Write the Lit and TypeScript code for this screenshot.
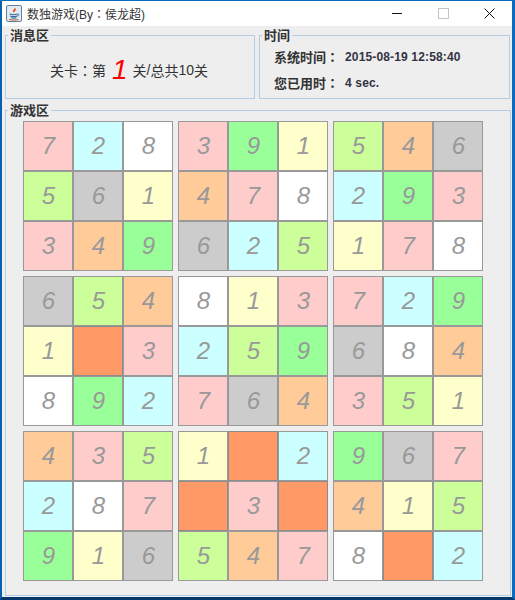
import { LitElement, html, css, svg } from "lit";
import { customElement } from "lit/decorators.js";

const COLORS: Record<number, string> = {
  0: "#ff9966", 1: "#ffffcc", 2: "#ccffff", 3: "#ffcccc", 4: "#ffcc99",
  5: "#ccff99", 6: "#cccccc", 7: "#ffcccc", 8: "#ffffff", 9: "#99ff99",
};

const BOARD = [
  [7,2,8,3,9,1,5,4,6],
  [5,6,1,4,7,8,2,9,3],
  [3,4,9,6,2,5,1,7,8],
  [6,5,4,8,1,3,7,2,9],
  [1,0,3,2,5,9,6,8,4],
  [8,9,2,7,6,4,3,5,1],
  [4,3,5,1,0,2,9,6,7],
  [2,8,7,0,3,0,4,1,5],
  [9,1,6,5,4,7,8,0,2],
];

const javaIcon = svg`<svg class="app-icon" viewBox="0 0 16 17" width="16" height="17">
  <rect x="0.5" y="0.5" width="15" height="16" rx="1.5" fill="#e3e9f0" stroke="#5f7f9f"/>
  <path d="M8.600 2.200c1 1.600-2 2.600-1.600 4.200.1.600.6 1 .9 1.600-.2-1.400 2.600-2.400 1.900-4-.2-.6-.7-1.200-1.200-1.800z" fill="#e0501a"/>
  <path d="M3.600 9c2 .7 6 .7 8 0M4.200 11c2 .6 5.400.6 7 0M5 12.800c1.600.5 4 .5 5.400 0" fill="none" stroke="#2f6a9e" stroke-width="1.100"/>
  <path d="M11.600 9.100c1.600-.4 2 1.400-.5 2" fill="none" stroke="#2f6a9e" stroke-width=".9"/>
  <path d="M3 14.500c2.600.7 7 .7 9.500 0" fill="none" stroke="#c0561e" stroke-width="1"/>
</svg>`;

@customElement("app-root")
export class AppRoot extends LitElement {
  static styles = css`
    :host {
      display: block;
      width: 515px;
      height: 600px;
      overflow: hidden;
      font-family: "Liberation Sans", "Noto Sans CJK SC", sans-serif;
      color: #333333;
    }
    .frame {
      box-sizing: border-box;
      width: 515px;
      height: 600px;
      display: flex;
      flex-direction: column;
      background: #eeeeee;
      border-style: solid;
      border-color: #0a6cc0;
      border-width: 1px 3px 3px 2px;
      border-bottom-color: #06386e;
      border-left-color: #0a5fae;
    }
    .titlebar {
      flex: none;
      height: 25px;
      background: #ffffff;
      display: flex;
      align-items: center;
      padding-left: 4px;
      gap: 5px;
      font-size: 12px;
      color: #333333;
    }
    .app-icon { flex: none; }
    .title-text { flex: 1; }
    .punct { font-family: "Noto Sans CJK TC", sans-serif; }
    .win-btn {
      flex: none;
      width: 46px;
      height: 25px;
      display: flex;
      align-items: center;
      justify-content: center;
    }
    .titlebar .win-btn { margin-left: -5px; }
    .content {
      flex: 1;
      min-height: 0;
      display: flex;
      flex-direction: column;
      padding: 1px 1px 1px 3px;
      gap: 3px;
    }
    .top {
      display: grid;
      grid-template-columns: 250px 251px;
      gap: 4px;
    }
    fieldset {
      margin: 0;
      padding: 0;
      min-width: 0;
      border: 1px solid #b3cde6;
      box-sizing: border-box;
    }
    legend {
      margin-left: 2px;
      padding: 0 2px;
      font-size: 13px;
      font-weight: 700;
      line-height: 16px;
      font-family: "Noto Sans CJK SC", sans-serif;
      color: #333333;
    }
    .msg { height: 72px; }
    .msg-body {
      height: 54px;
      display: flex;
      align-items: center;
      justify-content: center;
      font-size: 14px;
      white-space: pre;
      font-family: "Noto Sans CJK SC", sans-serif;
      padding-right: 2px;
      box-sizing: border-box;
    }
    .msg-body .latin { font-family: "Liberation Sans", sans-serif; }
    .level {
      font-family: "Liberation Sans", sans-serif;
      font-size: 28px;
      font-style: italic;
      color: #ff0000;
      line-height: 30px;
      margin: 0 5px 0 6px;
    }
    .time { height: 72px; }
    .time-body {
      padding: 0 0 0 14px;
      display: grid;
      grid-template-columns: 71px 1fr;
      grid-auto-rows: 26px;
      align-items: center;
    }
    .time-label {
      font-family: "Noto Sans CJK SC", sans-serif;
      font-size: 13px;
      font-weight: 700;
      white-space: pre;
    }
    .time-value {
      font-size: 12px;
      font-weight: 700;
      letter-spacing: 0.15px;
      color: #333344;
      padding-top: 2px;
    }
    .game { flex: 1; min-height: 0; }
    .grid {
      display: grid;
      grid-template-columns: repeat(3, 150px);
      gap: 5px;
      padding: 3px 0 0 17px;
    }
    .block {
      display: grid;
      grid-template-columns: repeat(3, 50px);
      grid-auto-rows: 50px;
    }
    .cell {
      box-sizing: border-box;
      border: 1px solid #999999;
      padding-left: 1px;
      display: flex;
      align-items: center;
      justify-content: center;
      font-family: "Liberation Sans", sans-serif;
      font-style: italic;
      font-size: 24px;
      color: #999999;
    }
    .cell.empty { border-color: #8c8c8c; }
  `;

  private block(bx: number, by: number) {
    const cells = [];
    for (let r = 0; r < 3; r++) {
      for (let c = 0; c < 3; c++) {
        const v = BOARD[by * 3 + r][bx * 3 + c];
        cells.push(html`<div class="cell ${v === 0 ? "empty" : ""}" style="background:${COLORS[v]}">${v === 0 ? "" : v}</div>`);
      }
    }
    return html`<div class="block">${cells}</div>`;
  }

  render() {
    const blocks = [];
    for (let by = 0; by < 3; by++) for (let bx = 0; bx < 3; bx++) blocks.push(this.block(bx, by));
    return html`
      <div class="frame">
        <div class="titlebar">
          ${javaIcon}
          <span class="title-text">数独游戏(By<span class="punct">：</span>侯龙超)</span>
          <span class="win-btn"><svg width="11" height="11" viewBox="0 0 11 11"><path d="M0 5.500h10" stroke="#111" stroke-width="1"/></svg></span>
          <span class="win-btn"><svg width="11" height="11" viewBox="0 0 11 11"><rect x=".5" y=".5" width="10" height="10" fill="none" stroke="#c4c4c4"/></svg></span>
          <span class="win-btn"><svg width="11" height="11" viewBox="0 0 11 11"><path d="M.5.5l10 10M10.500.5l-10 10" stroke="#111" stroke-width="1"/></svg></span>
        </div>
        <div class="content">
          <div class="top">
            <fieldset class="msg">
              <legend>消息区</legend>
              <div class="msg-body">关卡<span class="punct">：</span>第<span class="level">1</span>关<span class="latin">/</span>总共<span class="latin">10</span>关</div>
            </fieldset>
            <fieldset class="time">
              <legend>时间</legend>
              <div class="time-body">
                <span class="time-label">系统时间<span class="punct">：</span></span><span class="time-value">2015-08-19 12:58:40</span>
                <span class="time-label">您已用时<span class="punct">：</span></span><span class="time-value">4 sec.</span>
              </div>
            </fieldset>
          </div>
          <fieldset class="game">
            <legend>游戏区</legend>
            <div class="grid">${blocks}</div>
          </fieldset>
        </div>
      </div>
    `;
  }
}
